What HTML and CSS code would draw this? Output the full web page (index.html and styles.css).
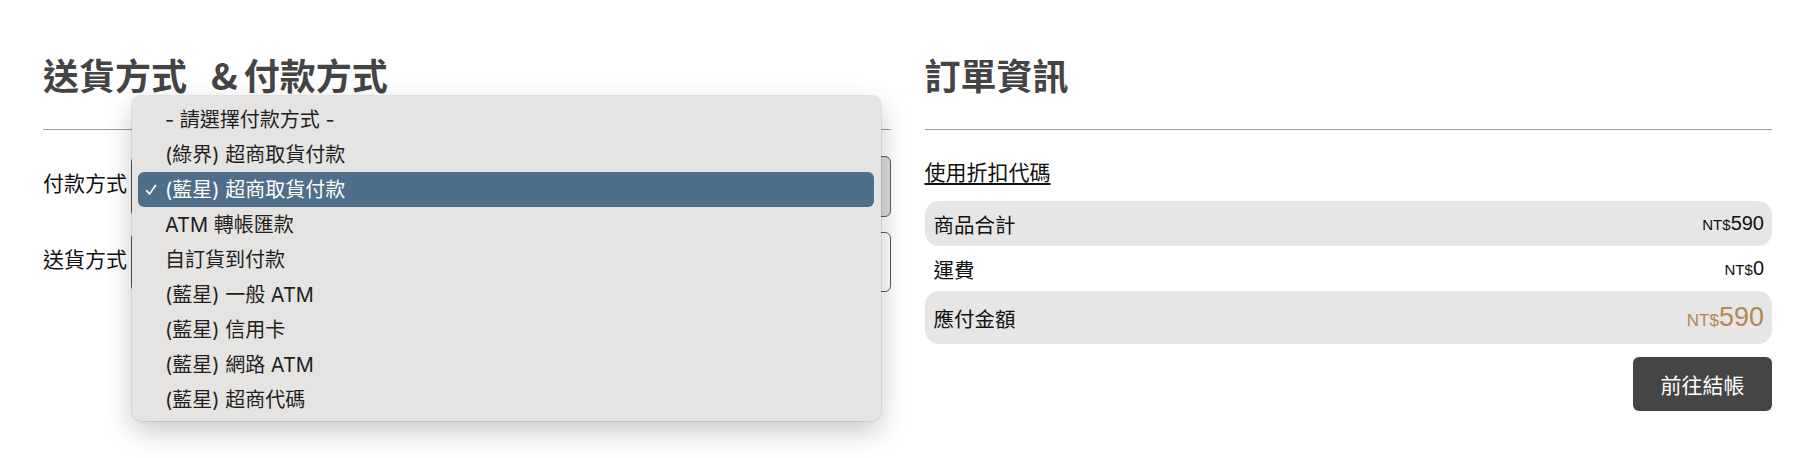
FILE: index.html
```html
<!doctype html>
<html lang="zh-Hant">
    <head>
        <meta charset="UTF-8" />
        <meta name="viewport" content="width=device-width, initial-scale=1.0" />
        <title>結帳</title>
        <link rel="stylesheet" href="styles.css">
    </head>
    <body>
        <main class="checkout">
            <section class="panel">
                <h2 class="panel-title">送貨方式<span class="amp">&amp;</span>付款方式</h2>
                <hr class="rule" />

                <div class="field">
                    <label class="field-label">付款方式</label>
                    <div class="select is-open">
                        <ul class="select-menu">
                            <li class="option">- 請選擇付款方式 -</li>
                            <li class="option">(綠界) 超商取貨付款</li>
                            <li class="option is-selected">
                                <svg class="check" viewBox="0 0 12 12" width="12" height="12">
                                    <path d="M1.5 6.5 L4.5 10 L10.5 1.5" fill="none" stroke="#fff" stroke-width="1.6" stroke-linecap="round" stroke-linejoin="round" />
                                </svg>
                                (藍星) 超商取貨付款
                            </li>
                            <li class="option">ATM 轉帳匯款</li>
                            <li class="option">自訂貨到付款</li>
                            <li class="option">(藍星) 一般 ATM</li>
                            <li class="option">(藍星) 信用卡</li>
                            <li class="option">(藍星) 網路 ATM</li>
                            <li class="option">(藍星) 超商代碼</li>
                        </ul>
                    </div>
                </div>

                <div class="field">
                    <label class="field-label">送貨方式</label>
                    <div class="select"></div>
                </div>
            </section>

            <section class="panel">
                <h2 class="panel-title">訂單資訊</h2>
                <hr class="rule" />

                <a class="discount" href="#">使用折扣代碼</a>

                <div class="summary">
                    <div class="summary-row is-shaded">
                        <span>商品合計</span>
                        <span class="price"><span class="cur">NT$</span>590</span>
                    </div>
                    <div class="summary-row">
                        <span>運費</span>
                        <span class="price"><span class="cur">NT$</span>0</span>
                    </div>
                    <div class="summary-row is-shaded is-total">
                        <span>應付金額</span>
                        <span class="price"><span class="cur">NT$</span>590</span>
                    </div>
                </div>

                <div class="actions">
                    <button class="btn-checkout" type="button">前往結帳</button>
                </div>
            </section>
        </main>
    </body>
</html>
```

FILE: styles.css
```css
:root {
    --ink: #111111;
    --title: #444444;
    --rule: #9a9a9a;
    --shade: #e6e6e6;
    --menu-bg: #e5e4e2;
    --menu-hi: #4e6e89;
    --gold: #b3894f;
    --dark: #454545;
}

* {
    margin: 0;
    padding: 0;
    box-sizing: border-box;
}

html,
body {
    min-height: 100%;
}

body {
    min-height: 458px;
    background: #ffffff;
    color: var(--ink);
    font-family: "Liberation Sans", "Noto Sans CJK TC", sans-serif;
    font-size: 20px;
}

.checkout {
    display: grid;
    grid-template-columns: 1fr 1fr;
    column-gap: 34px;
    padding: 53px 48px 60px 43px;
}

.panel-title {
    font-family: "Noto Sans CJK TC", sans-serif;
    font-size: 36px;
    line-height: 42px;
    font-weight: 700;
    color: var(--title);
}

.amp {
    display: inline-block;
    margin: 0 6px 0 24px;
}

.rule {
    border: 0;
    border-top: 1px solid var(--rule);
    margin-top: 34px;
}

/* form fields */

.field {
    display: flex;
    align-items: center;
    height: 61px;
    margin-top: 26px;
}

.field + .field {
    margin-top: 15px;
    height: 60px;
}

.field-label {
    width: 88px;
    flex-shrink: 0;
    font-size: 21px;
    line-height: 1;
    margin-top: -6px;
}

.select {
    position: relative;
    flex: 1;
    height: 100%;
    border: 1px solid #5a5a5a;
    border-radius: 6px;
    background: #ffffff;
}

.select.is-open {
    background: #dddddd;
}

/* open dropdown */

.select-menu {
    position: absolute;
    top: -61px;
    left: 0;
    right: 9px;
    list-style: none;
    padding: 6px 7px 4px 6px;
    background: var(--menu-bg);
    border-radius: 9px;
    box-shadow: 0 0 0 1px rgba(0, 0, 0, 0.08), 0 10px 28px rgba(0, 0, 0, 0.22);
    font-family: Inter, "Noto Sans CJK TC", sans-serif;
    font-size: 20px;
    color: #1f1f1f;
    z-index: 5;
}

.option {
    display: flex;
    align-items: center;
    height: 35px;
    padding-left: 27px;
    padding-bottom: 2px;
    border-radius: 6px;
    position: relative;
}

.option.is-selected {
    background: var(--menu-hi);
    color: #ffffff;
}

.check {
    position: absolute;
    left: 7px;
    top: 12px;
}

/* order summary */

.discount {
    display: inline-block;
    margin-top: 28px;
    color: var(--ink);
    font-size: 21px;
    line-height: 30px;
    text-decoration: underline;
    text-underline-offset: 3px;
}

.summary {
    margin-top: 13px;
}

.summary-row {
    display: flex;
    justify-content: space-between;
    align-items: center;
    height: 45px;
    padding: 0 8px 0 9px;
    border-radius: 14px;
    font-size: 20.5px;
}

.summary-row.is-shaded {
    background: var(--shade);
}

.summary-row.is-total {
    height: 53px;
}

.price {
    font-size: 20px;
}

.price .cur {
    font-size: 15px;
}

.is-total .price {
    font-size: 27px;
    color: var(--gold);
}

.is-total .price .cur {
    font-size: 17px;
}

.actions {
    display: flex;
    justify-content: flex-end;
    margin-top: 13px;
}

.btn-checkout {
    width: 139px;
    height: 54px;
    border: 0;
    border-radius: 6px;
    background: var(--dark);
    color: #ffffff;
    font-family: "Noto Sans CJK TC", sans-serif;
    font-size: 21px;
}
```
